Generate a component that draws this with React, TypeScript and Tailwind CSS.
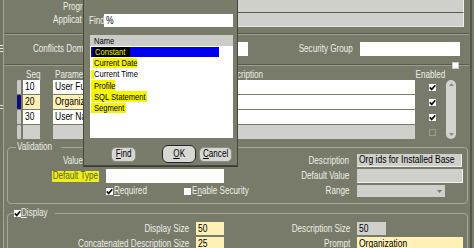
import React from "react";

type TProps = { children: React.ReactNode; o?: "l" | "r" | "c"; s?: "a" | "b" | "c"; className?: string };

function T({ children, o = "l", s = "a", className = "" }: TProps) {
  const origin = o === "r" ? "origin-right" : o === "c" ? "origin-center" : "origin-left";
  const scale = s === "b" ? "scale-x-[0.85]" : s === "c" ? "scale-x-[0.8]" : "scale-x-[0.81]";
  return <span className={`inline-block whitespace-nowrap ${scale} ${origin} ${className}`}>{children}</span>;
}

function Lbl({ w, children }: { w: string; children: React.ReactNode }) {
  return (
    <div className={`flex h-full shrink-0 items-center justify-end ${w}`}>
      <T o="r">{children}</T>
    </div>
  );
}

/* label partly hidden by the popup: starts at a fixed x and is clipped at the popup edge */
function CutLbl({ pl, children }: { pl: string; children: React.ReactNode }) {
  return (
    <div className={`flex h-full w-[80px] shrink-0 items-center overflow-hidden ${pl}`}>
      <T>{children}</T>
    </div>
  );
}

function Fld({ cls, children }: { cls: string; children?: React.ReactNode }) {
  return (
    <div className={`flex h-full shrink-0 items-center overflow-hidden pl-[2px] text-black ${cls}`}>
      {children != null && <T s="b">{children}</T>}
    </div>
  );
}

function Chk({ on, cls = "bg-white" }: { on?: boolean; cls?: string }) {
  return (
    <div className={`flex h-[7px] w-[7px] shrink-0 items-center justify-center ${cls}`}>
      {on && (
        <svg width="7" height="7" viewBox="0 0 7 7">
          <path d="M0.8 3.4 L2.7 5.4 L6.3 1.3" fill="none" stroke="#111" strokeWidth="1.7" />
        </svg>
      )}
    </div>
  );
}

function Sep() {
  return <div className="h-[2px] border-t border-b border-t-[#5a5c4f] border-b-[#9c9e8d]" />;
}

const rows = [
  { seq: "10", param: "User Fu", ind: "bg-[#c9c9c6]", f: "bg-white" },
  { seq: "20", param: "Organiza", ind: "bg-[#0a0a78]", f: "bg-[#fff0b6]" },
  { seq: "30", param: "User Na", ind: "bg-[#c9c9c6]", f: "bg-white" },
  { seq: "", param: "", ind: "bg-[#c9c9c6]", f: "bg-[#cfcfcc]" },
];

export default function App() {
  return (
    <div className="relative h-[248px] w-[474px] overflow-hidden bg-[#787b6a] font-['Liberation_Sans',Arial,sans-serif] text-[10px] leading-none text-[#eeeee8]">
      <div className="flex h-full">
        {/* left window edge */}
        <div className="flex w-[3px] shrink-0 flex-col bg-[#717463] *:shrink-0">
          <div className="mt-[45px] h-[1px] bg-[#e8e8e0]" />
          <div className="mt-[2px] h-[1px] bg-[#e8e8e0]" />
          <div className="mt-[2px] h-[1px] bg-[#e8e8e0]" />
          <div className="mt-[53px] h-[1px] bg-[#d8d8d0]" />
          <div className="mt-[2px] h-[1px] bg-[#d8d8d0]" />
        </div>

        <div className="flex w-[466px] shrink-0 flex-col border-l border-[#a3a594] *:shrink-0">
          {/* Row A */}
          <div className="flex h-[13px]">
            <CutLbl pl="pl-[59px]">Progr</CutLbl>
            <Fld cls="ml-[17px] w-[363px] bg-[#cfcfcc] border-b border-r border-b-[#5a5c50] border-r-[#f0f0ee]" />
          </div>
          {/* Row B */}
          <div className="flex h-[14px]">
            <CutLbl pl="pl-[49px]">Applicat</CutLbl>
            <Fld cls="ml-[17px] w-[363px] bg-[#cfcfcc] border-r border-b border-r-[#f0f0ee] border-b-[#e6e6e4]" />
          </div>
          <div className="mt-[6px]">
            <Sep />
          </div>
          {/* Row C */}
          <div className="mt-[7px] flex h-[14px]">
            <CutLbl pl="pl-[29px]">Conflicts Dom</CutLbl>
            <Fld cls="ml-[17px] w-[147px] bg-white" />
            <Lbl w="w-[105px]">Security Group</Lbl>
            <Fld cls="ml-[7px] w-[100px] bg-white" />
          </div>
          {/* separator with check */}
          <div className="mt-[5px] flex h-[8px] items-center">
            <div className="w-[448px]">
              <Sep />
            </div>
            <Chk cls="bg-white border border-[#c8c8c8]" />
            <div className="flex-1">
              <Sep />
            </div>
          </div>
          {/* table header */}
          <div className="flex h-[11px] items-center">
            <div className="w-[22px] shrink-0" />
            <div className="w-[29px] shrink-0"><T>Seq</T></div>
            <div className="w-[29px] shrink-0 overflow-hidden"><T>Parame</T></div>
            <div className="w-[153px] shrink-0" />
            <div className="w-[177px] shrink-0"><T>cription</T></div>
            <div className="flex w-[32px] shrink-0 justify-center"><T o="c">Enabled</T></div>
          </div>
          {/* table rows */}
          <div className="flex">
            <div className="flex flex-col">
              {rows.map((r, i) => (
                <div key={i} className="mb-[1px] flex h-[14px]">
                  <div className={`ml-[13px] w-[4px] shrink-0 rounded-[1px] ${r.ind}`} />
                  <Fld cls={`ml-[2px] w-[17px] ${r.f}`}>{r.seq || null}</Fld>
                  <Fld cls={`ml-[13px] w-[150px] ${r.f}`}>{r.param || null}</Fld>
                  <Fld cls={`ml-[4px] w-[208px] ${i === 3 ? "bg-[#cfcfcc]" : "bg-white"}`} />
                  <div className="ml-[14px] flex w-[7px] shrink-0 items-center">
                    {i < 3 ? <Chk on /> : <Chk cls="border border-[#9a9c8c]" />}
                  </div>
                </div>
              ))}
            </div>
            <div className="ml-[10px] flex h-[59px] w-[10px] shrink-0 flex-col items-center justify-between rounded-[5px] bg-[#d3d3d0] py-[3px]">
              <svg width="5" height="3" viewBox="0 0 5 3"><path d="M0 3 L2.5 0 L5 3 Z" fill="#8a8a86" /></svg>
              <svg width="5" height="3" viewBox="0 0 5 3"><path d="M0 0 L2.5 3 L5 0 Z" fill="#8a8a86" /></svg>
            </div>
          </div>

          {/* Validation */}
          <fieldset className="ml-[3px] mt-[2px] w-[461px] rounded-[4px] border border-[#a6a897] px-0 pb-[6px]">
            <legend className="ml-[8px] px-[1px]">
              <T>Validation</T>
            </legend>
            <div className="mt-[2px] flex h-[13px]">
              <div className="flex h-full w-[76px] shrink-0 items-center overflow-hidden pl-[55px]"><T>Value</T></div>
              <div className="w-[140px] shrink-0" />
              <Lbl w="w-[125px]">Description</Lbl>
              <Fld cls="ml-[8px] w-[105px] bg-[#cfcfcc] border-r border-b border-r-[#ededeb] border-b-[#ededeb]">Org ids for Installed Base</Fld>
            </div>
            <div className="mt-[2px] flex h-[14px]">
              <div className="flex h-full w-[91px] shrink-0 items-center justify-end">
                <div className="flex h-[11px] w-[47px] items-center justify-end bg-[#eded1e] pr-[1px] text-[#5f6418]">
                  <T o="r">Default Type</T>
                </div>
              </div>
              <Fld cls="ml-[7px] w-[118px] bg-white" />
              <Lbl w="w-[125px]">Default Value</Lbl>
              <Fld cls="ml-[8px] w-[106px] bg-[#cfcfcc] border-r border-b border-r-[#f4f4f2] border-b-[#f4f4f2]" />
            </div>
            <div className="mt-[2px] flex h-[12px] items-center">
              <div className="flex w-[216px] shrink-0 items-center">
                <div className="ml-[98px] flex w-[78px] shrink-0 items-center">
                  <Chk on />
                  <span className="ml-[1px]"><T><span className="underline">R</span>equired</T></span>
                </div>
                <div className="flex items-center">
                  <Chk />
                  <span className="ml-[1px]"><T>E<span className="underline">n</span>able Security</T></span>
                </div>
              </div>
              <Lbl w="w-[125px]">Range</Lbl>
              <div className="ml-[8px] flex h-full w-[88px] shrink-0 items-center justify-end bg-[#cfcfcc] pr-[3px]">
                <svg width="5" height="3" viewBox="0 0 5 3"><path d="M0 0 L2.5 3 L5 0 Z" fill="#777" /></svg>
              </div>
            </div>
          </fieldset>

          {/* Display */}
          <fieldset className="ml-[3px] mt-[4px] w-[461px] rounded-[4px] border border-[#a6a897] px-0 pb-[6px]">
            <legend className="ml-[6px] pr-[1px]">
              <div className="flex h-[10px] items-center">
                <Chk on />
                <span><T><span className="underline">D</span>isplay</T></span>
              </div>
            </legend>
            <div className="mt-[4px] flex h-[13px]">
              <Lbl w="w-[181px]">Display Size</Lbl>
              <Fld cls="ml-[7px] w-[28px] bg-[#fff0b6]">50</Fld>
              <Lbl w="w-[126px]">Description Size</Lbl>
              <Fld cls="ml-[7px] w-[29px] bg-[#cfcfcc]">50</Fld>
            </div>
            <div className="mt-[2px] flex h-[13px]">
              <Lbl w="w-[181px]">Concatenated Description Size</Lbl>
              <Fld cls="ml-[7px] w-[28px] bg-[#fff0b6]">25</Fld>
              <Lbl w="w-[126px]">Prompt</Lbl>
              <Fld cls="ml-[7px] w-[106px] bg-[#fff0b6]">Organization</Fld>
            </div>
          </fieldset>
        </div>
        <div className="ml-[1px] w-[2px] shrink-0 bg-[#55574b]" />
      </div>

      {/* LOV popup */}
      <div className="absolute left-[83px] top-0 flex h-[166px] w-[155px] flex-col border-b border-l border-r border-[#45473d] bg-[#797c6b] shadow-[0_1px_0_#3a3c33] *:shrink-0">
        <div className="mt-[14px] flex h-[13px] items-center">
          <div className="ml-[5px] w-[15px] shrink-0"><T>Find</T></div>
          <div className="flex h-full w-[129px] shrink-0 items-center bg-white pl-[2px] text-black"><T s="b">%</T></div>
        </div>
        <div className="ml-[6px] mt-[8px] flex h-[103px] w-[143px] flex-col bg-white text-[9.5px] text-black *:shrink-0">
          <div className="flex h-[11px] items-center bg-[#cbcbc8] pl-[4px]"><T s="c">Name</T></div>
          <div className="flex h-[11.3px] items-center">
            <div className="ml-[1px] flex h-[10px] w-[128px] items-center bg-[#0000f0]">
              <div className="ml-[2px] flex h-full w-[37px] items-center bg-black pl-[2px] text-[#f2f200]"><T s="c">Constant</T></div>
            </div>
          </div>
          <div className="flex h-[11.3px] items-center">
            <div className="ml-[3px] flex h-[10.5px] w-[44px] items-center bg-[#f5f500] pl-[1px]"><T s="c">Current Date</T></div>
          </div>
          <div className="flex h-[11.3px] items-center">
            <div className="ml-[1px] h-[9px] w-[3px] bg-[#f5f500]" />
            <div><T s="c">Current Time</T></div>
          </div>
          <div className="flex h-[11.3px] items-center">
            <div className="ml-[1px] flex h-[11.3px] w-[24px] items-center bg-[#f5f500] pl-[3px]"><T s="c">Profile</T></div>
          </div>
          <div className="flex h-[11.3px] items-center">
            <div className="ml-[1px] flex h-[11.3px] w-[56px] items-center bg-[#f5f500] pl-[3px]"><T s="c">SQL Statement</T></div>
          </div>
          <div className="flex h-[11.3px] items-center">
            <div className="ml-[1px] flex h-[10.5px] w-[35px] items-center bg-[#f5f500] pl-[3px]"><T s="c">Segment</T></div>
          </div>
        </div>
        <div className="mt-[7px] flex h-[18px] items-center text-black">
          <div className="ml-[27px] flex h-[15px] w-[25px] shrink-0 items-center justify-center rounded-[5px] border border-[#8d8f84] bg-[#d7d7d4]">
            <T o="c"><span className="underline">F</span>ind</T>
          </div>
          <div className="ml-[26px] flex h-[18px] w-[34px] shrink-0 items-center justify-center rounded-[6px] border-[1.5px] border-[#262626] bg-[#d7d7d4]">
            <T o="c"><span className="underline">O</span>K</T>
          </div>
          <div className="ml-[3px] flex h-[15px] w-[33px] shrink-0 items-center justify-center rounded-[5px] border border-[#8d8f84] bg-[#d7d7d4]">
            <T o="c"><span className="underline">C</span>ancel</T>
          </div>
        </div>
      </div>
    </div>
  );
}
